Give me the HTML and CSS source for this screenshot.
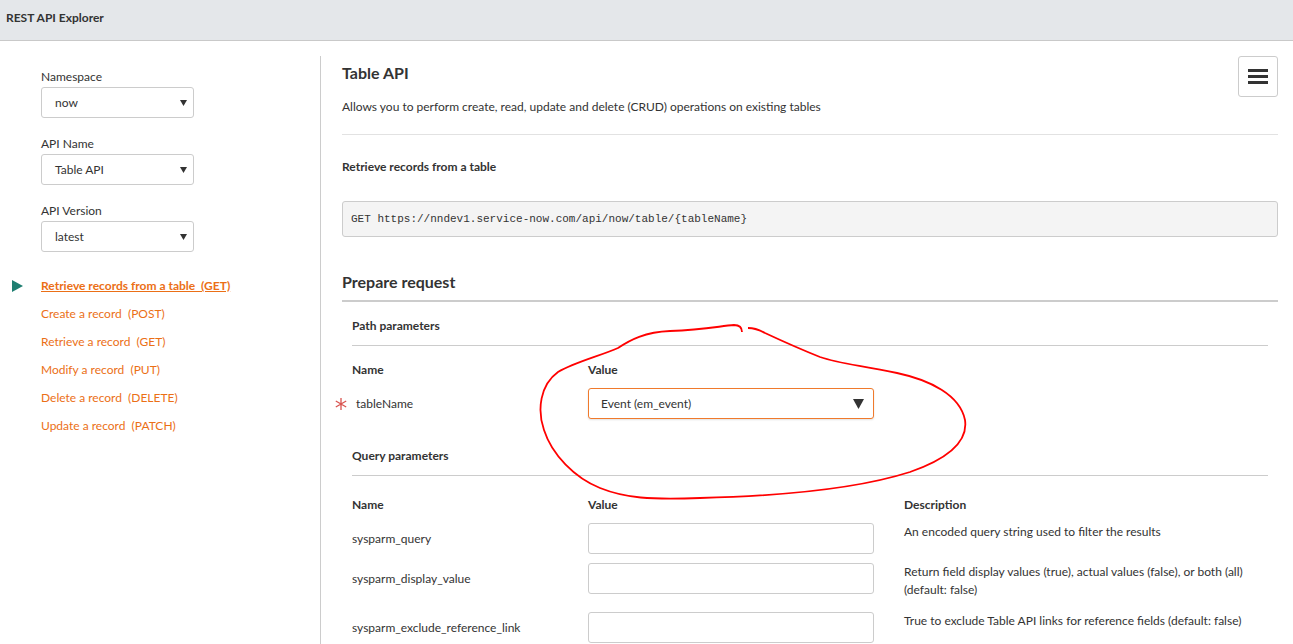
FILE: index.html
```html
<!DOCTYPE html>
<html lang="en">
<head>
  <meta charset="UTF-8" />
  <title>REST API Explorer</title>
  <link rel="stylesheet" href="styles.css">
</head>
<body>
  <header class="topbar">REST API Explorer</header>

  <div class="layout">
    <aside class="sidebar">
      <div class="field">
        <label>Namespace</label>
        <div class="select small"><span>now</span><svg width="7" height="6" viewBox="0 0 7 6"><path d="M0 0h7L3.5 6z"/></svg></div>
      </div>
      <div class="field">
        <label>API Name</label>
        <div class="select small"><span>Table API</span><svg width="7" height="6" viewBox="0 0 7 6"><path d="M0 0h7L3.5 6z"/></svg></div>
      </div>
      <div class="field">
        <label>API Version</label>
        <div class="select small"><span>latest</span><svg width="7" height="6" viewBox="0 0 7 6"><path d="M0 0h7L3.5 6z"/></svg></div>
      </div>

      <ul class="methods">
        <li class="active">
          <span class="marker"><svg width="11" height="12" viewBox="0 0 11 12"><path d="M0 0L11 6L0 12z"/></svg></span>
          <a href="#">Retrieve records from a table&nbsp; (GET)</a>
        </li>
        <li><span class="marker"></span><a href="#">Create a record&nbsp; (POST)</a></li>
        <li><span class="marker"></span><a href="#">Retrieve a record&nbsp; (GET)</a></li>
        <li><span class="marker"></span><a href="#">Modify a record&nbsp; (PUT)</a></li>
        <li><span class="marker"></span><a href="#">Delete a record&nbsp; (DELETE)</a></li>
        <li><span class="marker"></span><a href="#">Update a record&nbsp; (PATCH)</a></li>
      </ul>
    </aside>

    <main class="content">
      <div class="title-row">
        <h1>Table API</h1>
        <button class="menu-btn" aria-label="menu">
          <span></span><span></span><span></span>
        </button>
      </div>
      <p class="intro">Allows you to perform create, read, update and delete (CRUD) operations on existing tables</p>
      <hr class="sep">

      <h3 class="method-title">Retrieve records from a table</h3>
      <div class="endpoint">GET https://nndev1.service-now.com/api/now/table/{tableName}</div>

      <h2 class="prepare">Prepare request</h2>

      <section class="params">
        <h4>Path parameters</h4>
        <div class="param-grid">
          <div class="head">Name</div>
          <div class="head">Value</div>
          <div class="head"></div>

          <div class="name"><span class="req"><svg width="12" height="12" viewBox="0 0 12 12"><path d="M6 0v12M0.8 3l10.4 6M0.8 9l10.4-6"/></svg></span>tableName</div>
          <div class="select big"><span>Event (em_event)</span><svg width="11" height="10" viewBox="0 0 11 10"><path d="M0 0h11L5.5 10z"/></svg></div>
          <div class="desc"></div>
        </div>

        <h4 class="query-title">Query parameters</h4>
        <div class="param-grid query">
          <div class="head">Name</div>
          <div class="head">Value</div>
          <div class="head">Description</div>

          <div class="name">sysparm_query</div>
          <input type="text" class="text-input">
          <div class="desc">An encoded query string used to filter the results</div>

          <div class="name">sysparm_display_value</div>
          <input type="text" class="text-input">
          <div class="desc">Return field display values (true), actual values (false), or both (all) (default: false)</div>

          <div class="name">sysparm_exclude_reference_link</div>
          <input type="text" class="text-input">
          <div class="desc">True to exclude Table API links for reference fields (default: false)</div>
        </div>
      </section>
    </main>
  </div>

  <svg class="scribble" width="1293" height="644" viewBox="0 0 1293 644">
    <path d="M742,332 Q742,325 734,325 C720,326 705,330 670,331 C645,332 630,340 618,348 C600,356 575,362 558,372 C540,385 537,410 544,430 C552,455 575,478 600,488 C625,498 650,500 700,498 C780,496 860,488 910,472 C950,458 968,440 965,420 C960,395 930,380 897,373 C860,365 840,364 820,357 C795,347 780,340 765,333 C758,329 752,328 748,328"/>
  </svg>
</body>
</html>
```

FILE: styles.css
```css
body {
  margin: 0;
  font-family: Lato, "Open Sans", sans-serif;
  font-size: 12px;
  color: #333;
  background: #fff;
  height: 644px;
  overflow: hidden;
}
.topbar {
  height: 40px;
  line-height: 36px;
  padding-left: 6px;
  background: #e4e7ea;
  border-bottom: 1px solid #c9c9c9;
  font-weight: bold;
  font-size: 12px;
}
.layout {
  display: grid;
  grid-template-columns: 321px 1fr;
  padding-top: 15px;
}
.sidebar {
  border-right: 1px solid #ccc;
  height: 600px;
  padding-top: 13px;
}
.field {
  padding-left: 41px;
  margin-bottom: 18px;
}
.field label {
  display: block;
  line-height: 16px;
  margin-bottom: 2px;
}
.select {
  display: flex;
  align-items: center;
  justify-content: space-between;
  box-sizing: border-box;
  border: 1px solid #ccc;
  border-radius: 3px;
  background: #fff;
}
.select.small {
  width: 153px;
  height: 31px;
  padding: 0 6px 0 13px;
}
.select svg {
  fill: #333;
}
.methods {
  list-style: none;
  margin: 0;
  padding: 2px 0 0;
}
.methods li {
  display: flex;
  align-items: center;
  line-height: 28px;
}
.marker {
  width: 29px;
  padding-left: 12px;
  display: flex;
  align-items: center;
}
.marker svg {
  fill: #1f7f72;
}
.methods a {
  color: #eb6f16;
  text-decoration: none;
}
.methods .active a {
  font-weight: bold;
  text-decoration: underline;
}
.content {
  padding: 0 15px 0 21px;
}
.title-row {
  display: flex;
  justify-content: space-between;
  align-items: flex-start;
}
h1 {
  margin: 7px 0 0;
  font-size: 16px;
  line-height: 20px;
}
.menu-btn {
  width: 40px;
  height: 41px;
  border: 1px solid #ccc;
  border-radius: 3px;
  background: #fff;
  display: flex;
  flex-direction: column;
  align-items: center;
  justify-content: center;
  gap: 3px;
  padding: 0;
}
.menu-btn span {
  display: block;
  width: 20px;
  height: 3px;
  background: #333;
}
.intro {
  margin: 2px 0 0;
  line-height: 16px;
}
.sep {
  border: 0;
  border-top: 1px solid #e2e2e2;
  margin: 19px 0 0;
}
.method-title {
  margin: 24px 0 0;
  font-size: 12px;
  line-height: 16px;
}
.endpoint {
  margin-top: 26px;
  height: 36px;
  box-sizing: border-box;
  padding: 0 8px;
  line-height: 34px;
  background: #f4f4f4;
  border: 1px solid #ccc;
  border-radius: 3px;
  font-family: "Liberation Mono", monospace;
  font-size: 11px;
}
.prepare {
  margin: 35px 0 0;
  font-size: 16px;
  line-height: 20px;
  padding-bottom: 8px;
  border-bottom: 2px solid #ccc;
}
.params {
  padding: 0 10px;
}
.params h4 {
  margin: 16px 0 0;
  font-size: 12px;
  line-height: 16px;
  padding-bottom: 11px;
  border-bottom: 1px solid #ccc;
}
.params .query-title {
  margin-top: 29px;
}
.param-grid {
  display: grid;
  grid-template-columns: 236px 286px 1fr;
  row-gap: 9px;
  align-items: start;
  margin-top: 16px;
}
.param-grid.query {
  margin-top: 21px;
}
.head {
  font-weight: bold;
  line-height: 16px;
  margin-bottom: 1px;
}
.param-grid > :nth-child(3n) {
  padding-left: 30px;
}
.name {
  line-height: 31px;
  display: flex;
  align-items: center;
}
.req {
  margin-left: -17px;
  margin-right: 9px;
  display: flex;
}
.req svg {
  stroke: #d9534f;
  stroke-width: 1.3;
}
.select.big {
  height: 31px;
  border-color: #f07a2c;
  padding: 0 9px 0 12px;
  box-shadow: 0 1px 2px rgba(0, 0, 0, 0.12);
}
.text-input {
  box-sizing: border-box;
  width: 286px;
  height: 31px;
  margin: 0;
  border: 1px solid #ccc;
  border-radius: 3px;
}
.desc {
  line-height: 18px;
  padding-bottom: 4px;
}
.scribble {
  position: absolute;
  top: 0;
  left: 0;
  pointer-events: none;
}
.scribble path {
  fill: none;
  stroke: #f00;
  stroke-width: 1.8;
}
```
